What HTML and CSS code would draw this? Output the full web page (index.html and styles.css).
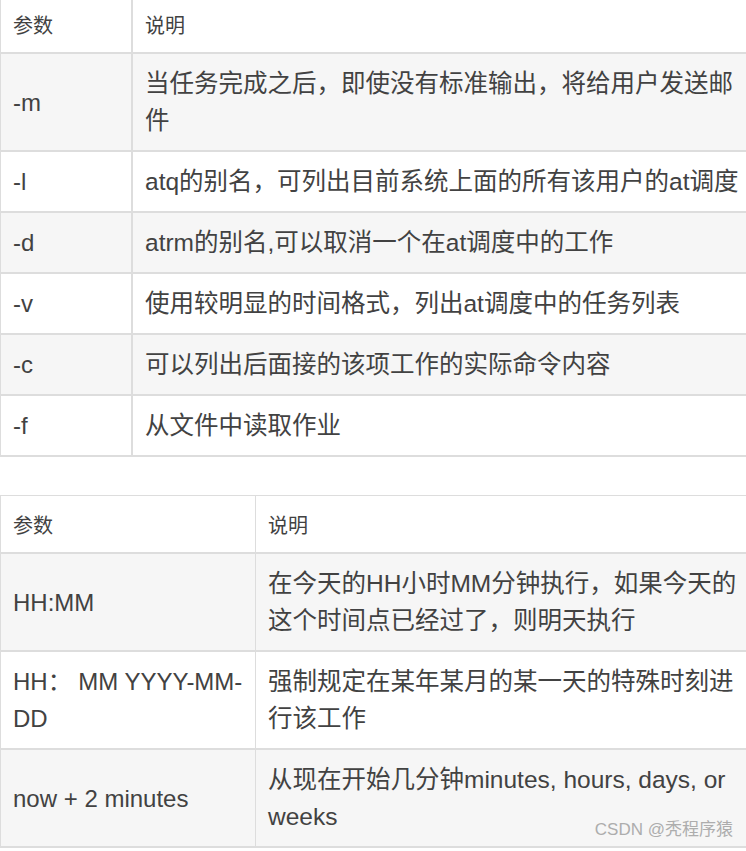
FILE: index.html
```html
<!DOCTYPE html>
<html lang="zh-CN">
<head>
  <meta charset="UTF-8" />
  <meta name="viewport" content="width=device-width, initial-scale=1.0" />
  <title>at 命令参数</title>
  <link rel="stylesheet" href="styles.css">
</head>
<body>
  <table class="params first">
    <thead>
      <tr><th class="key">参数</th><th>说明</th></tr>
    </thead>
    <tbody>
      <tr><td class="key">-m</td><td>当任务完成之后，即使没有标准输出，将给用户发送邮件</td></tr>
      <tr><td class="key">-l</td><td>atq的别名，可列出目前系统上面的所有该用户的at调度</td></tr>
      <tr><td class="key">-d</td><td>atrm的别名,可以取消一个在at调度中的工作</td></tr>
      <tr><td class="key">-v</td><td>使用较明显的时间格式，列出at调度中的任务列表</td></tr>
      <tr><td class="key">-c</td><td>可以列出后面接的该项工作的实际命令内容</td></tr>
      <tr><td class="key">-f</td><td>从文件中读取作业</td></tr>
    </tbody>
  </table>

  <div class="wrap">
    <table class="params second">
      <thead>
        <tr><th class="key">参数</th><th>说明</th></tr>
      </thead>
      <tbody>
        <tr><td class="key">HH:MM</td><td>在今天的HH小时MM分钟执行，如果今天的这个时间点已经过了，则明天执行</td></tr>
        <tr><td class="key">HH： MM YYYY-MM-DD</td><td>强制规定在某年某月的某一天的特殊时刻进行该工作</td></tr>
        <tr><td class="key">now + 2 minutes</td><td>从现在开始几分钟minutes, hours, days, or weeks</td></tr>
      </tbody>
    </table>
    <div class="mark">CSDN @秃程序猿</div>
  </div>
</body>
</html>
```

FILE: styles.css
```css
html, body {
  overflow: hidden;
}

body {
  margin: 0;
  background: #fff;
  color: #424242;
  font-family: "Liberation Sans", "Noto Sans CJK SC", sans-serif;
}

.params {
  width: 756px;
  table-layout: fixed;
  border-collapse: separate;
  border-spacing: 0;
  border-left: 1px solid #ddd;
}

.params th,
.params td {
  box-sizing: border-box;
  text-align: left;
  vertical-align: middle;
  padding: 11px 12px;
  border-bottom: 2px solid #ddd;
}

.params th {
  padding-top: 13px;
  padding-bottom: 9px;
  font-size: 20px;
  font-weight: normal;
  line-height: 34px;
}

.params td {
  font-size: 24.5px;
  line-height: 37px;
}

.params td.key {
  font-size: 24px;
}

.params tbody tr:nth-child(odd) td {
  background: #f6f6f6;
}

/* first table: top edge cut off */
.first {
  margin-top: -4px;
}

.first .key {
  width: 132px;
  border-right: 2px solid #ddd;
}

.wrap {
  position: relative;
  margin-top: 38px;
}

.second {
  border-top: 1px solid #ddd;
}

.second .key {
  width: 255px;
  padding-right: 8px;
  border-right: 1px solid #ddd;
}

.mark {
  position: absolute;
  right: 13px;
  bottom: 8px;
  font-size: 17px;
  line-height: 20px;
  color: #adadad;
}
```
